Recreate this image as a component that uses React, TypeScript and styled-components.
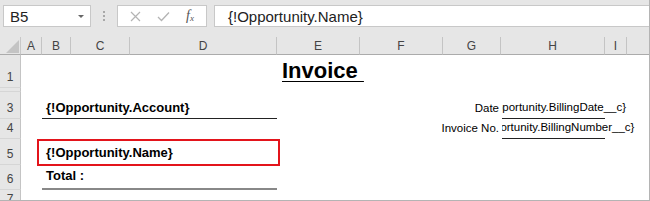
import styled, { createGlobalStyle } from 'styled-components';

const GlobalStyle = createGlobalStyle`
  html, body { margin: 0; padding: 0; background: #fff; }
  body { font-family: "Liberation Sans", Arial, sans-serif; }
`;

const COLS = ['A', 'B', 'C', 'D', 'E', 'F', 'G', 'H', 'I'];
const COL_WIDTHS = [21, 29, 59, 147, 83, 83, 58, 104, 22];
const ROW_HEIGHTS = [33, 4, 27, 20, 26, 25, 20];

const Frame = styled.div`
  width: 649px;
  height: 200px;
  border-right: 1px solid #b4b4b4;
  border-bottom: 1px solid #b4b4b4;
  overflow: hidden;
  background: #fff;
`;

const FormulaBar = styled.div`
  height: 37px;
  box-sizing: border-box;
  padding-top: 5px;
  background: #e6e6e6;
  display: flex;
  align-items: flex-start;
`;

const NameBox = styled.div`
  margin-left: 3px;
  width: 88px;
  height: 22px;
  box-sizing: border-box;
  border: 1px solid #c8c8c8;
  background: #fff;
  display: flex;
  align-items: center;
  justify-content: space-between;
  padding: 0 6px 0 6px;
  font-size: 15px;
  color: #222;
`;

const Caret = styled.span`
  width: 0;
  height: 0;
  border-left: 3px solid transparent;
  border-right: 3px solid transparent;
  border-top: 3px solid #666;
`;

const Grip = styled.div`
  width: 26px;
  height: 22px;
  display: flex;
  flex-direction: column;
  align-items: center;
  justify-content: center;
  gap: 2px;

  span {
    width: 2px;
    height: 2px;
    background: #a8a8a8;
  }
`;

const FnBox = styled.div`
  width: 90px;
  height: 22px;
  box-sizing: border-box;
  border: 1px solid #c8c8c8;
  background: #fff;
  display: flex;
  align-items: center;
  justify-content: space-around;
  padding: 0 4px;
`;

const FxLabel = styled.span`
  font-family: "Liberation Serif", "Times New Roman", serif;
  font-style: italic;
  font-size: 14px;
  color: #555;

  sub {
    font-size: 9px;
    vertical-align: -1px;
  }
`;

const FormulaInput = styled.div`
  flex: 1;
  margin-left: 7px;
  height: 22px;
  box-sizing: border-box;
  border: 1px solid #c8c8c8;
  border-right: none;
  background: #fff;
  padding-left: 13px;
  display: flex;
  align-items: center;
  font-size: 15px;
  color: #222;
`;

const Sheet = styled.div`
  position: relative;
  display: grid;
  grid-template-columns: 21px ${COL_WIDTHS.map((w) => `${w}px`).join(' ')} 1fr;
  grid-template-rows: 18px ${ROW_HEIGHTS.map((h) => `${h}px`).join(' ')};
`;

const Corner = styled.div`
  grid-column: 1;
  grid-row: 1;
  background: #e6e6e6;
  border-bottom: 1px solid #ababab;
  border-right: 1px solid #c8c8c8;
  position: relative;

  &::after {
    content: '';
    position: absolute;
    right: 1px;
    bottom: 1px;
    width: 13px;
    height: 13px;
    background: #c4c4c4;
    clip-path: polygon(100% 0, 100% 100%, 0 100%);
  }
`;

const ColHead = styled.div<{ $col: number }>`
  grid-column: ${(p) => p.$col};
  grid-row: 1;
  background: #e6e6e6;
  border-bottom: 1px solid #ababab;
  border-right: 1px solid #c4c4c4;
  display: flex;
  align-items: center;
  justify-content: center;
  font-size: 12px;
  color: #444;
`;

const ColFiller = styled.div`
  grid-column: 11;
  grid-row: 1;
  background: #e6e6e6;
  border-bottom: 1px solid #ababab;
`;

const RowHead = styled.div<{ $row: number }>`
  grid-column: 1;
  grid-row: ${(p) => p.$row};
  background: #e6e6e6;
  border-right: 1px solid #c4c4c4;
  border-bottom: 1px solid #d6d6d6;
  box-sizing: border-box;
  overflow: hidden;
  display: flex;
  align-items: flex-end;
  justify-content: center;
  padding-bottom: 3px;
  font-size: 12px;
  line-height: 14px;
  color: #444;
  min-height: 0;
`;

const Field = styled.div<{ $row: number; $pb: number; $line: string }>`
  grid-column: 3 / 6;
  grid-row: ${(p) => p.$row};
  border-bottom: ${(p) => p.$line};
  display: flex;
  align-items: flex-end;
  padding: 0 0 ${(p) => p.$pb}px 4px;
  font-size: 13px;
  font-weight: bold;
  line-height: 15px;
  color: #000;
`;

const Title = styled.div`
  grid-column: 6;
  grid-row: 2;
  display: flex;
  align-items: flex-end;
  padding: 0 0 6px 5px;
  white-space: pre;
  font-size: 22px;
  line-height: 22px;
  font-weight: bold;
  text-decoration: underline;
  text-decoration-thickness: 1px;
  text-underline-offset: 3px;
  color: #000;
`;

const Label = styled.div<{ $row: number }>`
  grid-column: 8;
  grid-row: ${(p) => p.$row};
  display: flex;
  align-items: flex-end;
  justify-content: flex-end;
  padding: 0 2px 4px 0;
  font-size: 11.5px;
  line-height: 13px;
  white-space: nowrap;
  color: #000;
`;

const Value = styled.div<{ $row: number }>`
  grid-column: 9;
  grid-row: ${(p) => p.$row};
  border-bottom: 1px solid #222;
  display: flex;
  align-items: flex-end;
  justify-content: center;
  padding-bottom: 4px;
  font-size: 11.5px;
  line-height: 13px;
  white-space: nowrap;
  color: #000;
  clip-path: inset(-4px -200px -4px 1px);
`;

const Highlight = styled.div`
  position: absolute;
  left: 37px;
  top: 102px;
  width: 243px;
  height: 27px;
  box-sizing: border-box;
  border: 2px solid #e3141b;
  pointer-events: none;
`;

function CrossIcon() {
  return (
    <svg width="11" height="11" viewBox="0 0 11 11">
      <path d="M1 1 L10 10 M10 1 L1 10" stroke="#b4b4b4" strokeWidth="1.2" fill="none" />
    </svg>
  );
}

function CheckIcon() {
  return (
    <svg width="13" height="11" viewBox="0 0 13 11">
      <path d="M1 6 L4.5 9.5 L12 1.5" stroke="#b4b4b4" strokeWidth="1.3" fill="none" />
    </svg>
  );
}

export default function App() {
  return (
    <>
      <GlobalStyle />
      <Frame>
        <FormulaBar>
          <NameBox>
            B5
            <Caret />
          </NameBox>
          <Grip>
            <span />
            <span />
            <span />
          </Grip>
          <FnBox>
            <CrossIcon />
            <CheckIcon />
            <FxLabel>
              f<sub>x</sub>
            </FxLabel>
          </FnBox>
          <FormulaInput>{'{!Opportunity.Name}'}</FormulaInput>
        </FormulaBar>
        <Sheet>
          <Corner />
          {COLS.map((c, i) => (
            <ColHead key={c} $col={i + 2}>
              {c}
            </ColHead>
          ))}
          <ColFiller />
          {ROW_HEIGHTS.map((_, i) => (
            <RowHead key={i} $row={i + 2}>
              {i + 1}
            </RowHead>
          ))}

          <Title>{'Invoice '}</Title>

          <Field $row={4} $pb={3} $line="1px solid #222">
            {'{!Opportunity.Account}'}
          </Field>
          <Field $row={6} $pb={4} $line="1px solid #666">
            {'{!Opportunity.Name}'}
          </Field>
          <Field $row={7} $pb={5} $line="2px solid #888">
            Total :
          </Field>

          <Label $row={4}>Date</Label>
          <Value $row={4}>{'{!Opportunity.BillingDate__c}'}</Value>
          <Label $row={5}>Invoice No.</Label>
          <Value $row={5}>{'{!Opportunity.BillingNumber__c}'}</Value>

          <Highlight />
        </Sheet>
      </Frame>
    </>
  );
}
